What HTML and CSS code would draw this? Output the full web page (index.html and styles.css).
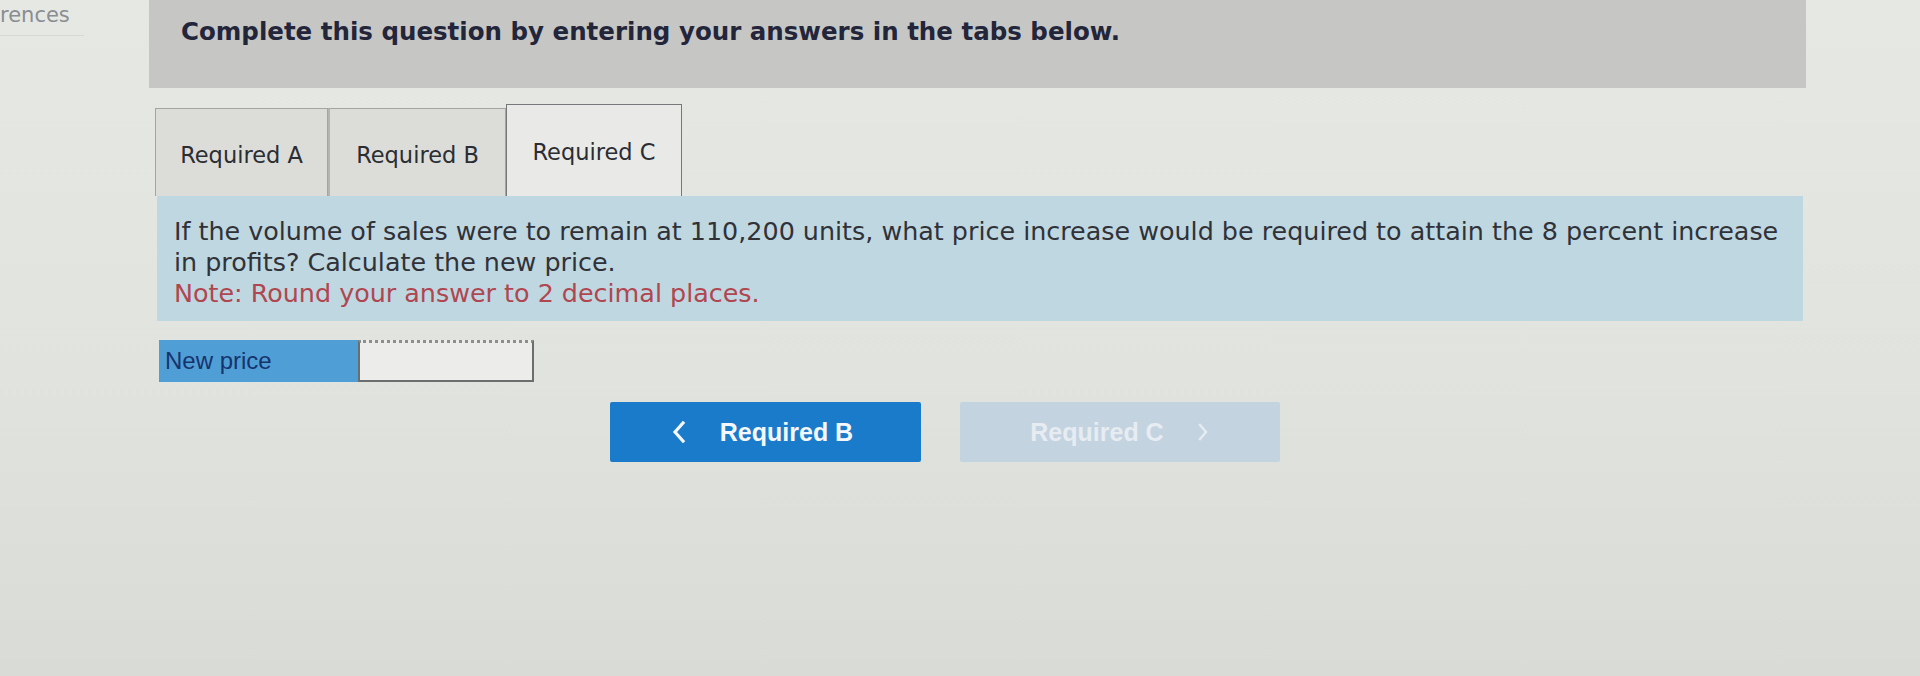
FILE: index.html
```html
<!DOCTYPE html>
<html>
<head>
<meta charset="utf-8">
<link rel="stylesheet" href="styles.css">
</head>
<body>
<div class="page">
  <aside class="sidebar"><span class="side-link">rences</span></aside>
  <main class="main">
    <header class="instr">Complete this question by entering your answers in the tabs below.</header>
    <div class="content">
      <nav class="tabs">
        <div class="tab tab-a">Required A</div>
        <div class="tab tab-b">Required B</div>
        <div class="tab tab-c active">Required C</div>
      </nav>
      <section class="question">
        <p class="q-text">If the volume of sales were to remain at 110,200 units, what price increase would be required to attain the 8 percent increase<br>in profits? Calculate the new price.</p>
        <p class="q-note">Note: Round your answer to 2 decimal places.</p>
      </section>
      <div class="answer-row">
        <div class="answer-label">New price</div>
        <div class="answer-input"></div>
      </div>
      <div class="nav-buttons">
        <button class="btn btn-prev"><svg class="chev chev-l" width="14" height="24" viewBox="0 0 14 24"><path d="M11 3 L3 12 L11 21" fill="none" stroke="currentColor" stroke-width="3.2" stroke-linecap="square"/></svg>Required B</button>
        <button class="btn btn-next">Required C<svg class="chev chev-r" width="14" height="24" viewBox="0 0 14 24"><path d="M4 5 L10 12 L4 19" fill="none" stroke="currentColor" stroke-width="2.4" stroke-linecap="square"/></svg></button>
      </div>
    </div>
  </main>
</div>
</body>
</html>
```

FILE: styles.css
```css
html, body {
  margin: 0;
  padding: 0;
}
body {
  width: 1920px;
  height: 676px;
  overflow: hidden;
  background: linear-gradient(180deg, #e6e8e4 0%, #e1e3df 55%, #d9dbd7 100%);
  font-family: "DejaVu Sans", Verdana, sans-serif;
  color: #333;
}
.page {
  display: flex;
  height: 676px;
}
.sidebar {
  width: 149px;
  flex: none;
  padding-top: 3px;
  box-sizing: border-box;
}
.side-link {
  display: block;
  font-family: "DejaVu Sans", sans-serif;
  font-size: 21px;
  color: #8a8d92;
  padding-bottom: 8px;
  width: 84px;
  border-bottom: 1px solid #d6d8d4;
}
.main {
  width: 1657px;
  flex: none;
}
.instr {
  height: 88px;
  background: #c6c7c5;
  box-sizing: border-box;
  padding: 17px 0 0 32px;
  font-weight: bold;
  font-size: 24.5px;
  color: #23253a;
}
.content {
  padding-left: 6px;
}
.tabs {
  display: flex;
  align-items: flex-end;
  height: 108px;
}
.tab {
  box-sizing: border-box;
  height: 88px;
  display: flex;
  align-items: center;
  justify-content: center;
  font-size: 22.5px;
  color: #2b2d33;
  background: #dcddd9;
  border: 1px solid #a4a5a2;
  border-bottom: none;
  padding-top: 4px;
}
.tab-a { width: 173px; }
.tab-b { width: 178px; border-left: 2px solid #b3b4b1; }
.tab-c { width: 176px; }
.tab.active {
  height: 92px;
  background: #e9eae7;
  border: 1px solid #77787a;
  border-bottom: none;
  padding-top: 2px;
}
.question {
  margin-left: 2px;
  width: 1646px;
  box-sizing: border-box;
  height: 125px;
  background: #bfd7e1;
  padding: 20px 10px 0 17px;
  font-size: 25.4px;
  line-height: 31px;
  color: #303238;
}
.q-text, .q-note {
  margin: 0;
}
.q-note {
  color: #b0464f;
}
.answer-row {
  display: flex;
  margin: 19px 0 0 4px;
  height: 42px;
}
.answer-label {
  width: 199px;
  background: #4f9fd6;
  box-sizing: border-box;
  padding: 7px 0 0 6px;
  font-family: "Liberation Sans", Arial, sans-serif;
  font-size: 24px;
  color: #17336e;
}
.answer-input {
  width: 176px;
  box-sizing: border-box;
  background: #ecedea;
  border: 2px solid #6c6d6d;
  border-top: 3px dotted #8c8d8d;
}
.nav-buttons {
  display: flex;
  gap: 39px;
  margin: 20px 0 0 455px;
}
.btn {
  height: 60px;
  border: none;
  border-radius: 2px;
  font-family: "Liberation Sans", Arial, sans-serif;
  font-weight: bold;
  font-size: 25px;
  display: flex;
  align-items: center;
  justify-content: center;
  padding: 0;
}
.btn-prev {
  width: 311px;
  background: #1b7bcb;
  color: #f4f7fb;
}
.btn-next {
  width: 320px;
  background: #c3d3e0;
  color: #e6ecf1;
}
.chev {
  display: block;
}
.chev-l { margin-right: 34px; margin-left: -6px; }
.chev-r { margin-left: 32px; }
```
